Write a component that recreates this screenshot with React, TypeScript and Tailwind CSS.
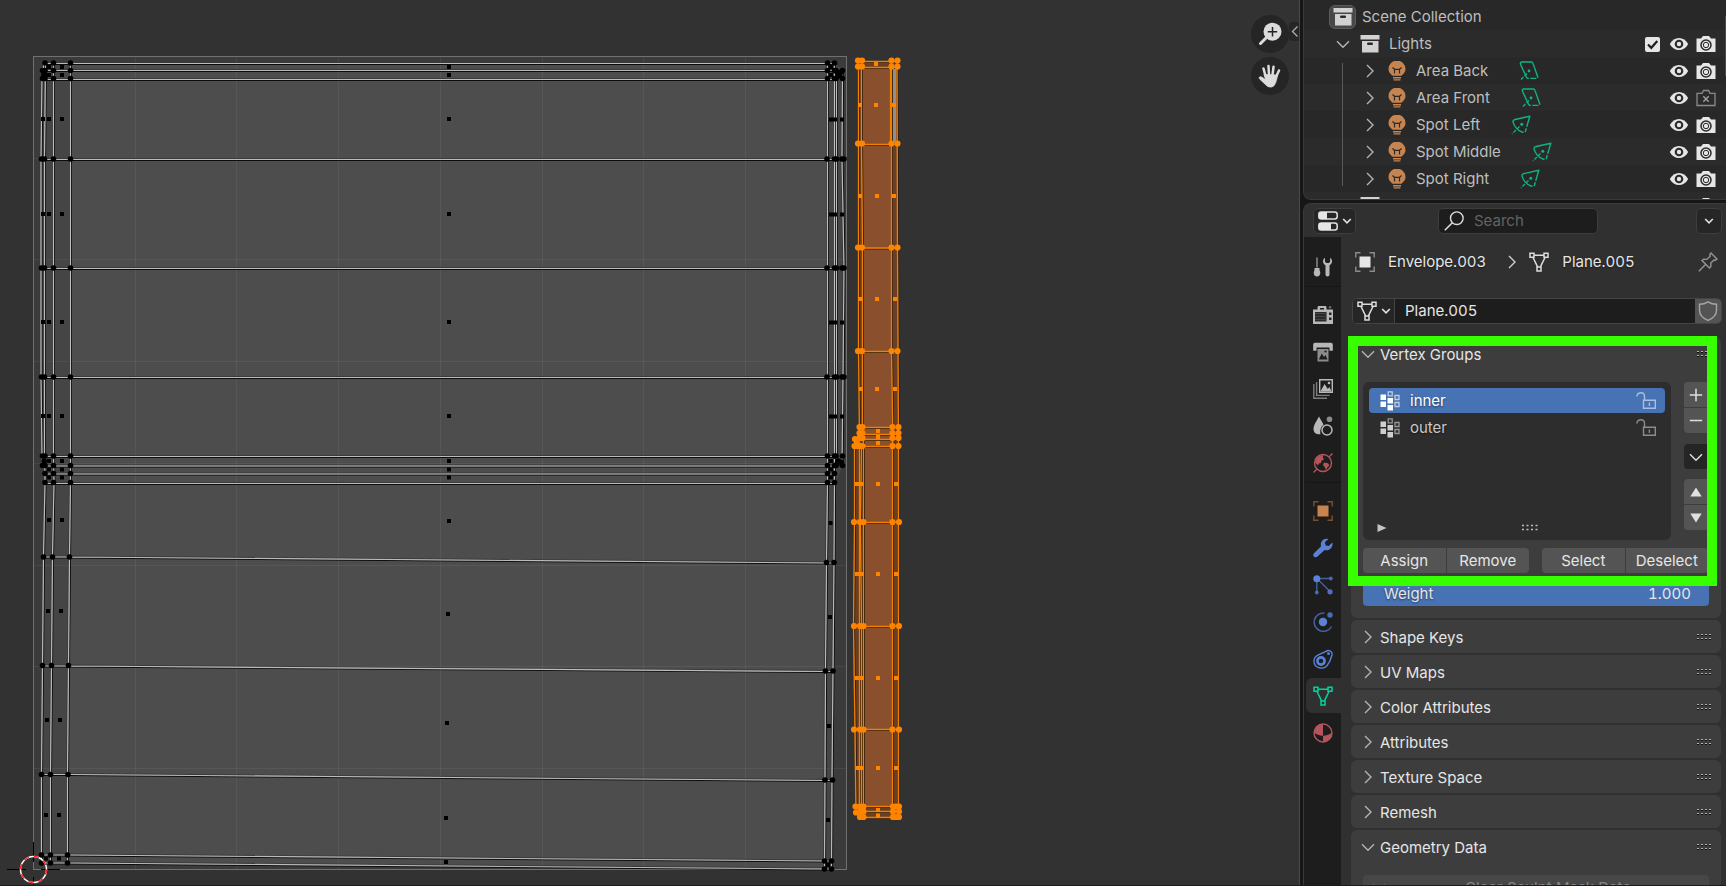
import React from "react";

type P = [number, number];
type Kids = { children: React.ReactNode };

/* ---------- icons ---------- */

function Icon({ children, className = "" }: Kids & { className?: string }) {
  return (
    <svg viewBox="0 0 20 20" aria-hidden="true" fill="none" stroke="none" className={"size-5 shrink-0 " + className}>
      {children}
    </svg>
  );
}

function Chevron({ down = false, className = "text-[#b4b4b4]" }: { down?: boolean; className?: string }) {
  return (
    <svg viewBox="0 0 16 16" aria-hidden="true" className={"size-4 shrink-0 " + className}>
      <path d={down ? "M2 5.2 L8 11.2 L14 5.2" : "M5 2 L11 8 L5 14"} fill="none" stroke="currentColor" strokeWidth="1.4" />
    </svg>
  );
}

function SmallChevron() {
  return (
    <svg viewBox="0 0 10 10" aria-hidden="true" className="size-2.5 shrink-0">
      <path d="M1.2 3 L5 6.8 L8.8 3" fill="none" stroke="#e0e0e0" strokeWidth="1.7" />
    </svg>
  );
}

const CollectionIcon = () => (
  <Icon>
    <path d="M.5 1h19v4.6H.5z M2 7h16.500v11.500H2z" fill="#d2d2d2" />
    <rect x="7" y="8.600" width="6" height="2.400" rx="1.200" fill="#282828" />
  </Icon>
);

const BulbIcon = () => (
  <Icon>
    <path
      d="M10 -.4a8.500 8.500 0 0 0-8.500 8.400c0 3.600 2.400 5 4.200 6.800h8.600c1.800-1.800 4.200-3.200 4.200-6.800A8.500 8.500 0 0 0 10-.4z M6 16h8v1.400H6z M6.600 18.200h6.800v1.200H6.600z M8 20h4v1H8z"
      fill="#c58450"
    />
    <path d="M5.500 6.500l2 1.800h5l2-1.800M7.500 8.300v4.200M12.500 8.300v4.200" stroke="#2a2a2a" strokeWidth="1.200" />
  </Icon>
);

const AreaIcon = () => (
  <Icon>
    <path d="M1.500 3.200c-.4-1.600.2-2.200 1.400-2.200h9.600c.8 0 1.200.4 1.500 1.400l4.600 13c.4 1.400 0 2-1.400 2H9c-.8 0-1.200-.4-1.500-1.200z" stroke="#0fb384" strokeWidth="1.400" strokeDasharray="30 1.500 6 1.500 40" />
    <path d="M8 12.500L1 19.500" stroke="#0fb384" strokeWidth="1.300" strokeDasharray="3.500 1.500" />
    <circle cx="10" cy="10" r="1.400" fill="#0fb384" />
  </Icon>
);

const SpotIcon = () => (
  <Icon>
    <path d="M18.800 1.200L3.200 4.800c-1 .3-1.500 1.200-1 2.600.8 3.400 4 8 8.800 9.600 2 .6 3 .4 3.500-1z" stroke="#0fb384" strokeWidth="1.400" strokeLinejoin="round" strokeDasharray="34 1.500 4 1.500 40" />
    <path d="M8.500 11.500L1 19" stroke="#0fb384" strokeWidth="1.300" strokeDasharray="3.500 1.500" />
    <circle cx="10.800" cy="9.200" r="1.500" fill="#0fb384" />
  </Icon>
);

const EyeIcon = () => (
  <Icon>
    <path d="M.8 10C3 6 6.200 4 10 4s7 2 9.200 6c-2.200 4-5.400 6-9.200 6S3 14 .8 10z" fill="#e6e6e6" />
    <circle cx="10" cy="10" r="4.300" fill="#2a2a2a" />
    <circle cx="10" cy="10" r="2.200" fill="#e6e6e6" />
  </Icon>
);

const CameraIcon = ({ off = false }: { off?: boolean }) =>
  off ? (
    <Icon>
      <path d="M1 5.300h5l1.500-2.800h5L14 5.300h5v12.200H1z" stroke="#8b8b8b" strokeWidth="1.300" />
      <path d="M7.300 8.300l5.400 5.400M12.700 8.300l-5.400 5.400" stroke="#a0a0a0" strokeWidth="1.400" />
    </Icon>
  ) : (
    <Icon>
      <path d="M.5 4.500H5L7 2h6l2 2.500h4.500V18H.5z" fill="#e6e6e6" />
      <circle cx="10" cy="11" r="5" stroke="#2a2a2a" strokeWidth="1.500" />
      <circle cx="10" cy="11" r="2.700" stroke="#2a2a2a" strokeWidth="1" />
    </Icon>
  );

const MeshIcon = ({ className = "text-[#dcdcdc]" }: { className?: string }) => (
  <Icon className={className}>
    <path
      d="M1 1.200h4v4H1z M15 1.200h4v4h-4z M8 15h4v4H8z M5 3.200h10 M4 5.500l4.600 9.300 M16 5.500l-4.600 9.300"
      stroke="currentColor"
      strokeWidth="1.500"
    />
  </Icon>
);

const ObjectIcon = ({ className, inner }: { className: string; inner: string }) => (
  <Icon className={className}>
    <rect x="4.500" y="4.500" width="11" height="11" fill={inner} />
    <path d="M.8 5.500V.8h4.700M14.500.8h4.700v4.700M19.200 14.500v4.700h-4.700M5.500 19.200H.8v-4.700" stroke="currentColor" strokeWidth="1.400" />
  </Icon>
);

const VertexGroupIcon = ({ active }: { active: boolean }) => (
  <Icon className={active ? "text-white" : "text-[#cfcfcf]"}>
    <path d="M.5 3.500h5.500v5.500H.5z M.5 10.500h5.500v5.500H.5z M7.500 7h5.500v5.500H7.500z M7.500 14h5.500v5.500H7.500z" fill="currentColor" />
    <path d="M8.200.8h4v4h-4z M15 4.500h4v4h-4z M15 11.500h4v4h-4z" stroke="currentColor" strokeOpacity=".65" strokeWidth="1.300" />
  </Icon>
);

const UnlockIcon = ({ active }: { active: boolean }) => (
  <Icon className={active ? "text-[#a9bfe0]" : "text-[#8c8c8c]"}>
    <path d="M7.500 9.300h11.800v8H7.500z M8.500 9V5.500C8.500 3 7 1.700 5 1.700S1.200 3 .8 5.500 M13.400 11.500v3.500" stroke="currentColor" strokeWidth="1.400" />
  </Icon>
);

/* ---------- UV viewport ---------- */

const upperRows = [63.5, 70.5, 79.5, 159.5, 268.5, 377.5, 456.5, 466, 474, 483.5];
const lowerRows: [number, number, number, number][] = [
  [43.5, 557, 834, 563],
  [42.5, 666, 833, 671.5],
  [41.5, 774.5, 832.5, 780.5],
  [41.5, 855, 831.5, 861],
  [41.5, 863, 831.5, 869],
];

const meshColumns: P[][] = [
  [[44, 63], [42, 79], [41, 159], [41, 377], [42, 456], [42, 466]],
  [[45.500, 63], [44.500, 159], [44.500, 456], [45, 474], [45, 483], [43.500, 557], [42.500, 666], [41.500, 775], [41.500, 863]],
  [[53.500, 63], [53.500, 456], [54, 483], [52.500, 557], [51.500, 666], [50.500, 775], [50.500, 863]],
  [[70.500, 63], [70.500, 483], [69.500, 557], [68.500, 666], [67.500, 775], [67.500, 863]],
  [[827.500, 63], [827.500, 483], [826.500, 563], [825.500, 671], [825, 780], [824.500, 869]],
  [[834.500, 63], [834.500, 483], [834, 563], [833, 671], [832, 780], [831.500, 869]],
  [[836.500, 71], [836.500, 466]],
  [[842.500, 71], [842, 159], [844, 268], [843, 377], [842, 466]],
];

const meshVertices: P[] = [
  ...[159, 268, 377].flatMap((y): P[] => [[41.500, y], [44.500, y], [53.500, y], [70.500, y], [827, y], [834.500, y], [836.500, y], [842, y], [844, y]]),
  ...[63, 70.500, 78.500, 456, 465.500, 473.500, 482.500].flatMap((y): P[] => [[45, y], [53.500, y], [70.500, y], [827.500, y], [834.500, y]]),
  ...[70.500, 78.500, 456, 465.500].flatMap((y): P[] => [[42.500, y], [836, y], [842.500, y]]),
  [838, 74], [840, 76], [838, 461], [841, 462], [44, 75], [44, 461], [837, 72], [841, 72], [837, 464],
  [43.500, 557], [52.500, 557], [69.500, 557], [826.500, 562.500], [834, 562.500],
  [42.500, 665.500], [51.500, 665.500], [68.500, 665.500], [825.500, 671], [833, 671],
  [41.500, 774.500], [50.500, 774.500], [68, 774.500], [825, 780], [832.500, 780],
  [41.500, 855], [50.500, 855], [67.500, 855], [824.500, 861], [831.500, 861],
  [41.500, 863], [50.500, 863], [67.500, 863], [824.500, 869], [831.500, 869],
];

const meshFaceDots: P[] = [
  ...[119, 214, 322, 416].flatMap((y): P[] => [[43, y], [49, y], [62, y], [449, y], [831, y + 0.5], [835, y + 0.5], [842, y + 0.5]]),
  ...[67, 75, 461, 469.500, 477.500].flatMap((y): P[] => [[49, y], [62, y], [449, y], [831, y]]),
  [49, 520], [62, 520], [449, 521], [830.500, 523],
  [48, 611], [61, 611], [448, 614], [830, 617],
  [47, 720], [60, 720], [447, 723], [829, 726],
  [46, 815], [59, 815], [446, 818], [828, 820],
  [46, 858.500], [59, 858.500], [446, 862], [828, 865],
];

const stripRows: [number, number, number][] = [
  [858, 898, 61.5], [858, 898, 67.5], [858, 898, 144.5], [858, 898, 248], [858, 898, 351.5], [859, 898, 427.5],
  [859, 898, 434.5], [855, 898, 439.5], [854, 899, 446.5], [854, 899, 522.5], [853, 899, 626.5], [854, 899, 729.5],
  [855, 899, 806.5], [855, 899, 811.5], [860, 899, 817.5],
];

const stripColumns: P[][] = [
  [[858.500, 61], [858.500, 248], [858.500, 351], [859.500, 440]],
  [[861.500, 61], [861.500, 144], [862.500, 248], [862.500, 440]],
  [[891.500, 61], [891.500, 144], [891.500, 351], [893, 446]],
  [[890.500, 67], [890.500, 144]],
  [[897, 61], [897.500, 248], [898.500, 446], [898.500, 817]],
  [[856, 440], [854.500, 446], [854.500, 522], [853.500, 626], [855, 729], [856, 811]],
  [[859.500, 446], [859.500, 817]],
  [[861.500, 446], [860.500, 522], [861.500, 626], [861.500, 817]],
  [[863.500, 440], [863.500, 817]],
  [[892.500, 440], [892.500, 817]],
];

const stripVertices: P[] = [
  ...[60.500, 66.500, 143.500, 247.500, 351].flatMap((y): P[] => [[858, y], [862, y], [891.500, y], [897.500, y]]),
  ...[427, 433, 438, 446].flatMap((y): P[] => [[859.500, y], [862.500, y], [892.500, y], [898.500, y]]),
  [855, 439], [854.500, 446], [857, 443], [857, 446],
  ...[522, 626, 729.500].flatMap((y): P[] => [[854, y], [860, y], [863.500, y], [892.500, y], [899, y]]),
  ...[806.500, 811.500, 817].flatMap((y): P[] => [[860, y], [863.500, y], [893, y], [899, y]]),
  [855.500, 806.500], [856, 812.500], [896, 806.500], [896, 817],
];

const stripFaceDots: P[] = [
  [876, 64], [860, 105], [876, 105], [894, 105], [860, 196], [877, 196], [894, 196],
  [860.500, 299], [877, 299], [895, 299], [861, 389], [877, 389], [895, 389],
  [878, 431], [878, 437], [878, 443],
  [857, 484], [861, 484], [878, 484], [896, 484],
  [857, 574], [861.500, 574], [878, 574], [896, 574],
  [857, 678], [862, 678], [878, 678], [896, 678],
  [857, 768], [861, 768], [878, 768], [896, 768],
  [878, 810], [878, 815.500],
];

const path = (pts: P[]) => "M" + pts.map((p) => p.join(" ")).join("L");
const meshLines = [
  ...upperRows.map((y) => path([[44, y], [835, y]])),
  ...lowerRows.map(([a, b, c, d]) => path([[a, b], [69, b], [c - 6, d], [c, d]])),
  ...meshColumns.map(path),
].join("");
const stripLines = [...stripRows.map(([a, b, y]) => path([[a, y], [b, y]])), ...stripColumns.map(path)].join("");
const grid = [1, 2, 3, 4, 5, 6, 7];

function Dots({ points, size, color }: { points: P[]; size: number; color: string }) {
  return (
    <g fill={color}>
      {points.map(([x, y], i) => (
        <rect key={i} x={x - size / 2} y={y - size / 2} width={size} height={size} />
      ))}
    </g>
  );
}

function Vertices({ points, r, color }: { points: P[]; r: number; color: string }) {
  return (
    <g fill={color}>
      {points.map(([x, y], i) => (
        <circle key={i} cx={x} cy={y} r={r} />
      ))}
    </g>
  );
}

function UvCanvas() {
  return (
    <svg viewBox="0 0 1299 885" preserveAspectRatio="xMinYMin meet" role="img" aria-label="UV layout" className="block h-full w-full">
      <rect x="33.500" y="56.500" width="813" height="813" fill="#3b3b3b" />
      <path d="M44 63H836L843 71V466L835 483L832 869L41 863L45 483L42 466V79Z" fill="#454545" />
      <path d="M70.500 63H827.500V483L824.500 869L67.500 863L70.500 483Z" fill="#4d4d4d" />
      <g stroke="#ffffff" strokeOpacity=".06">
        {grid.map((k) => (
          <path key={k} d={`M${33.5 + Math.round(101.7 * k)} 56V870M33 ${56.5 + Math.round(101.7 * k)}H847`} />
        ))}
      </g>
      <rect x="33.500" y="56.500" width="813" height="813" fill="none" stroke="#707070" />
      <g fill="none">
        <path d={meshLines} stroke="#3a3a3a" strokeWidth="1" transform="translate(-1 -1)" />
        <path d={meshLines} stroke="#0c0c0c" strokeWidth="1" transform="translate(1 1)" />
        <path d={meshLines} stroke="#bcbcbc" strokeWidth="1.200" />
      </g>
      <Dots points={meshFaceDots} size={4} color="#000000" />
      <Vertices points={meshVertices} r={2.8} color="#000000" />

      <path d="M858 61H898L899 446V817H860L855 806L853 626L855 446L859 427Z" fill="#6b3f25" />
      <path d="M863 67H890V144H891L892 446V806H864V446H863Z" fill="#8a4f2d" />
      <path d="M892 68H896V142H892Z" fill="#8f8f8f" />
      <g fill="none">
        <path d={stripLines} stroke="#2a1a10" strokeWidth="1" transform="translate(1 1)" />
        <path d={stripLines} stroke="#f08000" strokeWidth="1.300" />
      </g>
      <Dots points={stripFaceDots} size={4} color="#ff8500" />
      <Vertices points={stripVertices} r={3.1} color="#ff8500" />

      <path d="M7 869.500H26M41 869.500H60M33.500 842V862M33.500 877V885" stroke="#000000" />
      <circle cx="33.500" cy="869.500" r="13" fill="none" stroke="#ffffff" strokeWidth="1.500" />
      <circle cx="33.500" cy="869.500" r="13" fill="none" stroke="#ff2020" strokeWidth="1.500" strokeDasharray="5.100 5.100" />
    </svg>
  );
}

function Viewport() {
  return (
    <main className="relative min-w-0 flex-1 border-r border-[#4a4a4a] bg-[#323232]">
      <UvCanvas />
      <div className="absolute top-[15px] right-[10px] flex flex-col gap-[4px]">
        <button aria-label="Zoom" className="flex size-[38px] items-center justify-center rounded-full bg-[#252525]">
          <svg viewBox="0 0 24 24" className="size-6">
            <path d="M2.500 21.500L9 15" stroke="#dcdcdc" strokeWidth="3" strokeLinecap="round" />
            <circle cx="14.500" cy="9.700" r="9" fill="#dcdcdc" />
            <path d="M14.500 5v9.400M9.800 9.700h9.400" stroke="#232323" strokeWidth="1.500" />
          </svg>
        </button>
        <button aria-label="Pan" className="flex size-[38px] items-center justify-center rounded-full bg-[#252525]">
          <svg viewBox="0 0 24 24" className="size-6" fill="none" stroke="#dcdcdc" strokeLinecap="round">
            <path d="M7.500 12L5.500 4.500M11 11L10.500 2M14.500 11L15.500 2.800M18 13L21 6.500" strokeWidth="2.500" />
            <path d="M6.300 10.500L19.500 11C18.500 17 17.500 20 15.500 22.200C13 23.500 10.500 23.300 8.500 21.500L1.800 15.200C.2 13.400 2 12.300 3.500 13L7.500 15.500Z" fill="#dcdcdc" strokeWidth=".8" />
          </svg>
        </button>
      </div>
      <button aria-label="Show sidebar" className="absolute top-[22px] right-0 flex h-[19px] w-[10px] items-center rounded-l bg-[#262626]">
        <svg viewBox="0 0 10 19" className="h-[19px] w-[10px]">
          <path d="M8.500 4.500L3.500 9.500L8.500 14.500" fill="none" stroke="#b0b0b0" strokeWidth="1.300" />
        </svg>
      </button>
    </main>
  );
}

/* ---------- outliner ---------- */

function Toggles({ name, off = false, check = false }: { name: string; off?: boolean; check?: boolean }) {
  return (
    <div className="ml-auto flex items-center gap-[7px]">
      {check && (
        <label className="relative flex size-5 items-center justify-center">
          <input type="checkbox" defaultChecked aria-label={"Enable " + name} className="size-[15px] appearance-none rounded-[2px] bg-[#e6e6e6]" />
          <svg viewBox="0 0 15 15" className="pointer-events-none absolute size-[15px]">
            <path d="M3 7.500L6.300 10.800L12.300 4" fill="none" stroke="#1d1d1d" strokeWidth="2.200" />
          </svg>
        </label>
      )}
      <button aria-label={"Hide " + name}><EyeIcon /></button>
      <button aria-label={"Render " + name}><CameraIcon off={off} /></button>
    </div>
  );
}

const lights = [
  { name: "Area Back", area: true },
  { name: "Area Front", area: true, off: true },
  { name: "Spot Left" },
  { name: "Spot Middle" },
  { name: "Spot Right" },
];

function Outliner() {
  return (
    <section aria-label="Outliner" className="relative h-[200px] shrink-0 overflow-hidden rounded-bl-lg border-b border-l border-[#3a3a3a] bg-[#282828] pt-[3px] text-[#bebebe]">
      <ul className="[&>li]:flex [&>li]:h-[27px] [&>li]:items-center [&>li]:gap-[9px] [&>li]:pt-px [&>li]:pr-[10px] [&>li:nth-child(even)]:bg-[#2b2b2b]">
        <li className="pl-[25px]">
          <span className="-mr-[3px] flex h-6 w-[27px] items-center justify-center rounded-md border border-[#5c5c5c] bg-[#484848]"><CollectionIcon /></span>
          <span>Scene Collection</span>
        </li>
        <li className="pl-[31px]">
          <Chevron down />
          <CollectionIcon />
          <span>Lights</span>
          <Toggles name="Lights" check />
        </li>
        {lights.map((l) => (
          <li key={l.name} className="pl-[58px]">
            <Chevron />
            <BulbIcon />
            <span>{l.name}</span>
            <span className="ml-[22px]">{l.area ? <AreaIcon /> : <SpotIcon />}</span>
            <Toggles name={l.name} off={l.off} />
          </li>
        ))}
        <li className="pl-[56px]">
          <CollectionIcon />
          <Toggles name="collection" check />
        </li>
      </ul>
      <div className="absolute top-[63px] left-[38px] h-[123px] w-px bg-[#5a5a5a]" />
      <div className="absolute top-4 right-0 h-[60px] w-px bg-[#4c4c4c]" />
    </section>
  );
}

/* ---------- properties ---------- */

const tabGroups: { name: string; icon: React.ReactNode }[][] = [
  [
    {
      name: "Tool",
      icon: (
        <Icon>
          <path d="M4 .5v10" stroke="#8c8c8c" strokeWidth="1.500" />
          <path d="M1.500 11h5v2l.8 2.500c0 2.500-1.300 4-3.300 4s-3.300-1.500-3.300-4L1.500 13z" fill="#b8b8b8" />
          <path d="M12 .8c-1.800 1.200-2.300 3.200-1.700 5 .4 1.200 1.200 2 2.200 2.500v9.200c0 1.200.9 2 2 2s2-.8 2-2V8.300c1-.5 1.900-1.300 2.300-2.500.6-1.800.1-3.800-1.700-5v4.300l-1.300 1h-2.400l-1.400-1z" fill="#b8b8b8" />
        </Icon>
      ),
    },
  ],
  [
    {
      name: "Render",
      icon: (
        <Icon>
          <path d="M4.500 4.500V2.500c0-1 .5-1.500 1.500-1.500h6c1 0 1.500.5 1.500 1.500v2H20V19H0V4.500z M7 3v1.500h4V3z" fill="#b8b8b8" fillRule="evenodd" />
          <rect x="2" y="7" width="11.500" height="9.500" fill="#2a2a2a" />
          <path d="M2 8.500h11.500M2 11.500h11.500M2 14.500h11.500" stroke="#454545" />
          <path d="M16 7.500h2.500V10H16zM16 12.500h2.500V15H16z" fill="#242424" />
          <circle cx="17" cy="2.200" r="1.200" fill="#707070" />
        </Icon>
      ),
    },
    {
      name: "Output",
      icon: (
        <Icon>
          <path d="M2 .8h16c1 0 1.800.8 1.800 2v6H16.500V5.500h-13v3.300H.2v-6c0-1.200.8-2 1.800-2z" fill="#b8b8b8" />
          <path d="M4.500 7h11v12.500h-11z" fill="#8c8c8c" />
          <path d="M5.800 17.500l3-6 2.200 3.500 1.500-2 2 4.500z" fill="#1d1d1d" />
          <circle cx="12.500" cy="9.500" r="1.100" fill="#1d1d1d" />
        </Icon>
      ),
    },
    {
      name: "View Layer",
      icon: (
        <Icon>
          <path d="M.8 5v14.200H14M3.600 3v13.400H16.500" stroke="#7d7d7d" strokeWidth="1.400" />
          <path d="M6 0h14v14H6z M7.400 1.400v11.200h11.200V1.400z" fill="#b8b8b8" fillRule="evenodd" />
          <path d="M7.400 12.600l4.200-7.600 3.200 5 1.600-2 2.200 4.600z" fill="#b8b8b8" />
          <circle cx="16" cy="4" r="1.300" fill="#b8b8b8" />
        </Icon>
      ),
    },
    {
      name: "Scene",
      icon: (
        <Icon>
          <path d="M6 .5C4 4.500.5 9 .5 13c0 3 1.800 5 4.500 5.300h2.500C6.800 15 7.600 10.500 10.500 9 9.500 6 7.500 3.500 6 .5z" fill="#b8b8b8" />
          <circle cx="16.500" cy="3.200" r="2.800" fill="#8c8c8c" />
          <circle cx="14" cy="14" r="5" stroke="#b8b8b8" strokeWidth="1.500" />
        </Icon>
      ),
    },
    {
      name: "World",
      icon: (
        <Icon>
          <circle cx="10" cy="10" r="8.500" stroke="#b4555c" strokeWidth="1.400" />
          <path d="M3 5.500C5 3 7.500 2 10.500 2l-.8 2.200 1.300 2-2.500 1.600-.6 2.200-2 .6L5 12.500 2 9.500zM11 9.500l4 .8 1.500 2.200-2 1.700-1.500 3-1.300-3.200L10 12z" fill="#b4555c" />
          <path d="M16.300 3.700L19.500.5M3.700 16.300L.5 19.500" stroke="#b4555c" strokeWidth="1.300" />
        </Icon>
      ),
    },
  ],
  [
    { name: "Object", icon: <ObjectIcon className="text-[#7a4f2c]" inner="#c58450" /> },
    {
      name: "Modifiers",
      icon: (
        <Icon>
          <path d="M15.500 1C12 .2 8.800 1.800 8 5c-.3 1.200-.2 2.200.1 3.200L1 15.200c-1.200 1.300-.9 2.700 0 3.500s2.300 1 3.500-.1L11.600 12c1.200.4 2.500.4 3.900-.1 3-1 4.600-4 3.900-7.400l-3.700 3.600-3-.6-.8-3.200z" fill="#5b82d6" />
        </Icon>
      ),
    },
    {
      name: "Particles",
      icon: (
        <Icon>
          <path d="M4 3.500h12M3.800 5v12M5 4.500l12 12" stroke="#4462a0" strokeWidth="1.400" />
          <circle cx="3.800" cy="3.700" r="3.500" fill="#5b82d6" />
          <circle cx="17.800" cy="3.500" r="1.900" fill="#4a6cb5" />
          <circle cx="3.800" cy="17.500" r="1.900" fill="#4a6cb5" />
          <circle cx="17" cy="16.800" r="2.600" fill="#5070bb" />
        </Icon>
      ),
    },
    {
      name: "Physics",
      icon: (
        <Icon>
          <path d="M11.500 1A9.200 9.200 0 1 0 18.500 14.500" stroke="#4462a0" strokeWidth="1.500" />
          <circle cx="10" cy="10" r="4.200" fill="#5b82d6" />
          <circle cx="17" cy="3" r="2.700" fill="#4a6cb5" />
        </Icon>
      ),
    },
    {
      name: "Constraints",
      icon: (
        <Icon>
          <path d="M13 2.500c2-2 6.800-.8 6 3.500-1 4-2.800 8-5 10.700C9.500 21.300 1 18.800 1 12.200c0-3.200 1.500-5 4.300-6.300z" stroke="#5b82d6" strokeWidth="1.400" />
          <circle cx="8" cy="12" r="3.600" stroke="#5b82d6" strokeWidth="2.600" />
          <circle cx="15.500" cy="4.700" r="1.400" fill="#5b82d6" />
        </Icon>
      ),
    },
    { name: "Data", icon: <MeshIcon className="text-[#00d39a]" /> },
    {
      name: "Material",
      icon: (
        <Icon>
          <circle cx="10" cy="10" r="9" stroke="#b4555c" strokeWidth="1.400" />
          <path d="M10 1v11.700C6.500 12.700 3 11.500 1 9.500A9 9 0 0 1 10 1zM10 12.700c3.500 0 7-1.200 9-3.200A9 9 0 0 1 10 19z" fill="#b4555c" />
        </Icon>
      ),
    },
  ],
];

function TabBar() {
  return (
    <nav role="tablist" aria-label="Properties" aria-orientation="vertical" className="flex w-[37px] shrink-0 flex-col gap-[2px] bg-[#1d1d1d] pt-3 pl-[2px]">
      {tabGroups.map((group, g) => (
        <React.Fragment key={g}>
          {g > 0 && <div className="mb-2 h-px shrink-0 bg-[#161616]" />}
          {group.map((t) => (
            <button
              key={t.name}
              role="tab"
              aria-label={t.name}
              aria-selected={t.name === "Data"}
              className="flex h-[35px] shrink-0 items-center justify-center rounded-l-md pr-px aria-selected:bg-[#303030]"
            >
              {t.icon}
            </button>
          ))}
        </React.Fragment>
      ))}
    </nav>
  );
}

function Grip() {
  return (
    <svg viewBox="0 0 14 8" aria-hidden="true" className="h-2 w-3.5">
      {[0, 4, 8, 12].map((x) => (
        <g key={x}>
          <path d={`M${x} 1.500h2M${x} 5.500h2`} stroke="#b0b0b0" />
          <path d={`M${x} 2.500h2M${x} 6.500h2`} stroke="#101010" />
        </g>
      ))}
    </svg>
  );
}

function Panel({ title, open = false, children }: { title: string; open?: boolean; children?: React.ReactNode }) {
  return (
    <section className="relative rounded-md bg-[#3d3d3d]">
      <h2>
        <button aria-expanded={open} className="flex h-[33px] w-full items-center gap-1 pr-2.5 pl-[9px] text-left">
          <Chevron down={open} />
          <span className="mr-auto pt-[2px]">{title}</span>
          <Grip />
        </button>
      </h2>
      {children}
    </section>
  );
}

const sideButton = "flex h-[25px] items-center justify-center bg-[#545454] pr-px";
const wideButton = "h-[25px] flex-1 bg-[#545454]";

function VertexGroups() {
  return (
    <Panel title="Vertex Groups" open>
      <div className="flex flex-col gap-2 px-3 pt-3 pb-3">
        <div className="flex gap-[13px]">
          <div className="flex h-[158px] flex-1 flex-col rounded-md bg-[#2d2d2d] p-1.5">
            <ul className="flex flex-col gap-[2px]">
              {["inner", "outer"].map((name, i) => (
                <li
                  key={name}
                  className={
                    "flex h-[25px] items-center rounded pr-[9px] pl-[11px] " + (i === 0 ? "bg-[#4772b3] text-white" : "text-[#c8c8c8]")
                  }
                >
                  <VertexGroupIcon active={i === 0} />
                  <span className="mr-auto ml-[10px]">{name}</span>
                  <button aria-label={"Lock " + name}><UnlockIcon active={i === 0} /></button>
                </li>
              ))}
            </ul>
            <div className="mt-auto flex items-center pb-px pl-2">
              <svg viewBox="0 0 10 10" className="size-2.5"><path d="M.5 1L9.500 5L.5 9Z" fill="#c4c4c4" /></svg>
              <div className="flex flex-1 justify-center pl-2">
                <svg viewBox="0 0 16 8" className="h-2 w-4">
                  <path d="M0 1.500h2M4.500 1.500h2M9 1.500h2M13.500 1.500h2M0 5.500h2M4.500 5.500h2M9 5.500h2M13.500 5.500h2" stroke="#c0c0c0" strokeWidth="1.300" />
                </svg>
              </div>
            </div>
          </div>
          <div className="flex w-[25px] flex-col">
            <button aria-label="Add" className={sideButton + " rounded-t"}>
              <svg viewBox="0 0 14 14" className="size-3.5"><path d="M7 .8v12.400M.8 7h12.400" stroke="#dedede" strokeWidth="1.500" /></svg>
            </button>
            <button aria-label="Remove group" className={sideButton + " mt-px mb-[11px] rounded-b"}>
              <svg viewBox="0 0 14 14" className="size-3.5"><path d="M.8 6.500h12.400" stroke="#dedede" strokeWidth="1.500" /></svg>
            </button>
            <button aria-label="Specials" className="mb-2.5 flex h-[25px] items-center justify-center rounded bg-[#252525] pr-px">
              <Chevron down className="text-[#e0e0e0]" />
            </button>
            <button aria-label="Move up" className={sideButton + " rounded-t"}>
              <svg viewBox="0 0 12 12" className="size-3"><path d="M.3 10.500L6 1.500L11.700 10.500Z" fill="#e0e0e0" /></svg>
            </button>
            <button aria-label="Move down" className={sideButton + " mt-px rounded-b"}>
              <svg viewBox="0 0 12 12" className="size-3"><path d="M.3 1.500L6 10.500L11.700 1.500Z" fill="#e0e0e0" /></svg>
            </button>
          </div>
        </div>
        <div className="flex gap-[13px] pr-px">
          <div className="flex flex-1 gap-px">
            <button className={wideButton + " rounded-l"}>Assign</button>
            <button className={wideButton + " rounded-r"}>Remove</button>
          </div>
          <div className="flex flex-1 gap-px">
            <button className={wideButton + " rounded-l"}>Select</button>
            <button className={wideButton + " rounded-r"}>Deselect</button>
          </div>
        </div>
        <label className="flex h-[25px] items-center justify-between rounded bg-[#4772b3] pr-[18px] pl-[21px]">
          <span>Weight</span>
          <input defaultValue="1.000" inputMode="decimal" className="w-24 bg-transparent text-right tabular-nums outline-none" />
        </label>
      </div>
      <div className="pointer-events-none absolute -top-px right-1 -left-[3px] h-[250px] border-[10px] border-[#37ff00]" />
    </Panel>
  );
}

function Properties() {
  return (
    <section aria-label="Properties" className="flex min-h-0 flex-1 flex-col overflow-hidden rounded-tl-lg border-t border-l border-[#3a3a3a] bg-[#303030] text-[#e6e6e6]">
      <header className="flex h-[33px] shrink-0 items-start pt-1 pr-[4px] pl-[9px]">
        <button aria-label="Editor type" className="flex h-[26px] w-[43px] items-center justify-center gap-1 rounded-[5px] border border-[#3d3d3d] bg-[#262626]">
          <Icon>
            <rect x=".8" y="1" width="18.400" height="7" rx="2.500" stroke="#e0e0e0" strokeWidth="1.500" />
            <path d="M3 1h6v7H3a2 2 0 0 1-2-2V3a2 2 0 0 1 2-2z" fill="#e6e6e6" />
            <rect x=".8" y="12" width="18.400" height="7" rx="2.500" stroke="#e0e0e0" strokeWidth="1.500" />
            <path d="M3 12h10v7H3a2 2 0 0 1-2-2v-3a2 2 0 0 1 2-2z" fill="#e6e6e6" />
          </Icon>
          <SmallChevron />
        </button>
        <label className="ml-[82px] flex h-[26px] w-[160px] items-center gap-2.5 rounded-[5px] border border-[#3d3d3d] bg-[#1d1d1d] pl-[5px]">
          <Icon>
            <circle cx="12.800" cy="7.200" r="6.300" stroke="#dcdcdc" strokeWidth="1.400" />
            <path d="M8.300 11.700L.8 19.200" stroke="#dcdcdc" strokeWidth="1.600" />
          </Icon>
          <input type="search" aria-label="Search" placeholder="Search" className="w-24 bg-transparent outline-none placeholder:text-[#636363]" />
        </label>
        <button aria-label="Options" className="ml-auto flex size-[26px] items-center justify-center rounded-[5px] border border-[#3d3d3d] bg-[#262626]">
          <SmallChevron />
        </button>
      </header>
      <div className="flex min-h-0 flex-1">
        <TabBar />
        <div className="min-w-0 flex-1 pr-[5px] pl-2.5 [text-shadow:0_1px_2px_rgba(0,0,0,0.5)]">
          <div className="flex h-[50px] items-center pr-[3px] pl-1 tabular-nums">
            <ObjectIcon className="text-[#8c8c8c]" inner="#e6e6e6" />
            <span className="ml-[13px]">Envelope.003</span>
            <span className="mr-[9px] ml-[18px] flex"><Chevron className="text-[#d0d0d0]" /></span>
            <MeshIcon />
            <span className="ml-[13px]">Plane.005</span>
            <button aria-label="Pin" className="ml-auto">
              <Icon>
                <path d="M13 1l6 6-1.500 1.200-1.600-.2-3.200 3.300.2 3.200L11.500 16 4 8.500l1.600-1.200 3.100.1 3.500-3.200-.4-1.800z M7.500 12.500L.8 19.200" stroke="#949494" strokeWidth="1.400" />
              </Icon>
            </button>
          </div>
          <div className="-mr-px mt-[11px] ml-px flex h-[26px] overflow-hidden rounded-[5px] border border-[#444444] bg-[#1d1d1d]">
            <button aria-label="Browse mesh data" className="flex w-[42px] items-center justify-center gap-1 border-r border-[#444444] bg-[#262626]">
              <MeshIcon />
              <SmallChevron />
            </button>
            <input aria-label="Mesh name" defaultValue="Plane.005" className="min-w-0 flex-1 bg-transparent pl-2.5 tabular-nums outline-none" />
            <button aria-label="Fake user" className="flex w-[26px] items-center justify-center bg-[#545454]">
              <Icon>
                <path d="M10 .8c2.500 1.700 5.500 2.500 8.500 2.500v6.200c0 4.500-3.500 7.700-8.500 9.900-5-2.200-8.500-5.400-8.500-9.900V3.300c3 0 6-.8 8.500-2.500z" stroke="#a6a6a6" strokeWidth="1.400" />
              </Icon>
            </button>
          </div>
          <div className="mt-[13px] flex flex-col gap-[2px]">
            <VertexGroups />
            <Panel title="Shape Keys" />
            <Panel title="UV Maps" />
            <Panel title="Color Attributes" />
            <Panel title="Attributes" />
            <Panel title="Texture Space" />
            <Panel title="Remesh" />
            <Panel title="Geometry Data" open>
              <div className="px-3 pt-3">
                <button disabled className="flex h-[25px] w-full items-center rounded bg-[#474747] pl-2 text-[#858585]">
                  <svg viewBox="0 0 16 16" className="size-4"><path d="M2 4L14 16M14 4L2 16" stroke="#5c5c5c" strokeWidth="1.500" /></svg>
                  <span className="flex-1 text-center">Clear Sculpt Mask Data</span>
                </button>
              </div>
            </Panel>
          </div>
        </div>
      </div>
    </section>
  );
}

export default function App() {
  return (
    <div className="flex h-screen overflow-hidden border-b border-[#1c1c1c] bg-[#161616] font-['Inter','Liberation_Sans',sans-serif] text-[15px] leading-5">
      <Viewport />
      <aside className="flex w-[426px] shrink-0 flex-col gap-[3px] pl-[3px]">
        <Outliner />
        <Properties />
      </aside>
    </div>
  );
}
